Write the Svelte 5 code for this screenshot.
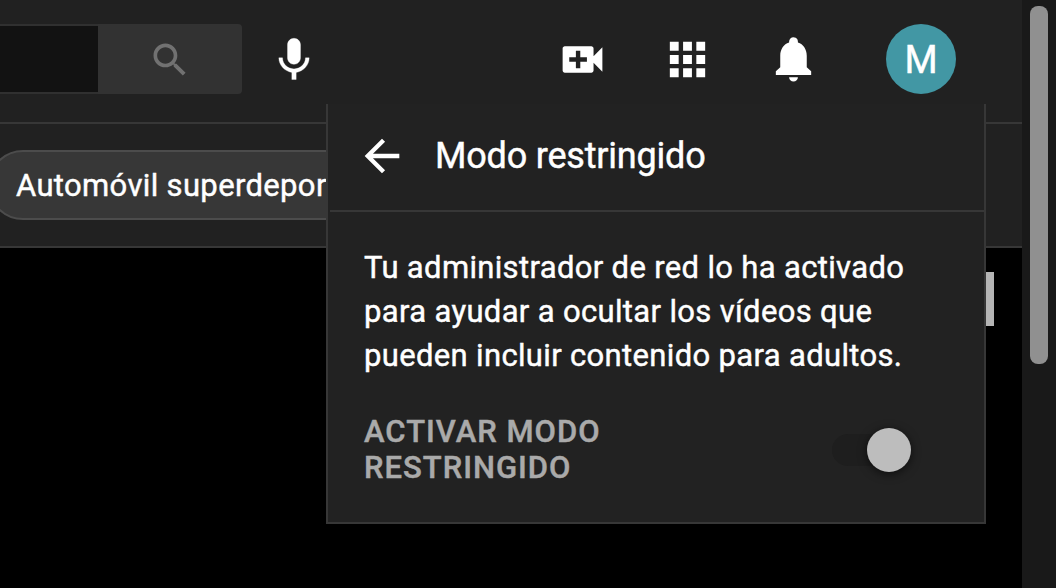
<script lang="ts">
    let enabled: boolean = true;
    let title: string = "Modo restringido";
    let description: string = "Tu administrador de red lo ha activado para ayudar a ocultar los vídeos que pueden incluir contenido para adultos.";

    const actions = [
        { name: "Crear", d: "M17 10.5V7c0-.55-.45-1-1-1H4c-.55 0-1 .45-1 1v10c0 .55.45 1 1 1h12c.55 0 1-.45 1-1v-3.5l4 4v-11l-4 4zM14 13h-3v3H9v-3H6v-2h3V8h2v3h3v2z" },
        { name: "Aplicaciones", d: "M4 8h4V4H4v4zm6 12h4v-4h-4v4zm-6 0h4v-4H4v4zm0-6h4v-4H4v4zm6 0h4v-4h-4v4zm6-10v4h4V4h-4zm-6 4h4V4h-4v4zm6 6h4v-4h-4v4zm0 6h4v-4h-4v4z" },
        { name: "Notificaciones", d: "M10 20h4c0 1.1-.9 2-2 2s-2-.9-2-2zm10-2.65V19H4v-1.65l2-1.88v-5.15C6 7.4 7.56 5.1 10 4.34v-.38c0-1.42 1.49-2.5 2.99-1.76.65.32 1.01 1.03 1.01 1.76v.39c2.44.75 4 3.06 4 5.98v5.15l2 1.87z" }
    ];
</script>

<div class="screen">
    <div class="page">
        <header class="masthead">
            <div class="search-input"></div>
            <button class="search-button" aria-label="Buscar">
                <svg viewBox="0 0 24 24" width="44" height="44"><path d="M15.5 14h-.79l-.28-.27C15.41 12.59 16 11.11 16 9.5 16 5.91 13.09 3 9.5 3S3 5.91 3 9.5 5.91 16 9.5 16c1.61 0 3.09-.59 4.23-1.57l.27.28v.79l5 4.99L20.49 19l-4.99-5zm-6 0C7.01 14 5 11.99 5 9.5S7.01 5 9.5 5 14 7.01 14 9.5 11.99 14 9.5 14z" /></svg>
            </button>
            <button class="mic" aria-label="Buscar por voz">
                <svg viewBox="0 0 24 24" width="52" height="52"><path d="M12 14c1.66 0 2.99-1.34 2.99-3L15 5c0-1.66-1.34-3-3-3S9 3.34 9 5v6c0 1.66 1.34 3 3 3zm5.3-3c0 3-2.54 5.1-5.3 5.1S6.7 14 6.7 11H5c0 3.41 2.72 6.23 6 6.72V21h2v-3.28c3.28-.48 6-3.3 6-6.72h-1.7z" /></svg>
            </button>
            <div class="actions">
                {#each actions as action}
                    <button aria-label={action.name}>
                        <svg viewBox="0 0 24 24" width="53" height="53"><path d={action.d} /></svg>
                    </button>
                {/each}
            </div>
            <div class="avatar">M</div>
        </header>
        <nav class="chips">
            <div class="chip">Automóvil superdeportivo</div>
        </nav>
        <main class="content">
            <div class="thumb"></div>
        </main>
    </div>

    <aside class="scrollbar">
        <div class="scroll-thumb"></div>
    </aside>

    <section class="menu">
        <div class="menu-header">
            <svg viewBox="0 0 24 24" width="52" height="52"><path d="M20 11H7.83l5.59-5.59L12 4l-8 8 8 8 1.41-1.41L7.83 13H20v-2z" /></svg>
            <h2>{title}</h2>
        </div>
        <div class="menu-body">
            <p>{description}</p>
            <div class="toggle-row">
                <span class="toggle-label">Activar modo restringido</span>
                <div class="toggle" class:on={enabled}>
                    <div class="knob"></div>
                </div>
            </div>
        </div>
    </section>
</div>

<style>
    :global(body) { margin: 0; background: #000; overflow: hidden; }

    .screen {
        position: relative;
        display: flex;
        width: 1056px;
        height: 588px;
        overflow: hidden;
        color: #fff;
        font-family: Roboto, 'Liberation Sans', sans-serif;
        -webkit-text-stroke: 0.45px currentColor;
    }

    .page { display: flex; flex-direction: column; width: 1022px; }

    button { display: flex; align-items: center; justify-content: center; padding: 0; border: none; background: none; }
    svg { display: block; flex: none; fill: #fff; }

    .masthead {
        display: flex;
        box-sizing: border-box;
        height: 124px;
        padding-top: 24px;
        border-bottom: 2px solid #373737;
        background: #212121;
    }

    .search-input {
        box-sizing: border-box;
        width: 98px;
        height: 70px;
        border: solid #303030;
        border-width: 2px 0;
        background: #121212;
    }

    .search-button {
        box-sizing: border-box;
        width: 144px;
        height: 70px;
        padding-top: 2px;
        border-radius: 0 4px 4px 0;
        background: #323232;
    }
    .search-button svg { fill: #717171; }

    .mic { width: 54px; height: 72px; margin-left: 25px; }
    .mic path { stroke: #fff; stroke-width: 0.15; }

    .actions { display: flex; gap: 52.5px; height: 71px; margin-left: 234.5px; }
    .actions button { width: 53px; }

    .avatar {
        width: 70px;
        height: 70px;
        margin-left: 66.5px;
        border-radius: 50%;
        background: #4297a4;
        font-size: 38px;
        line-height: 73px;
        text-align: center;
    }

    .chips {
        display: flex;
        align-items: center;
        box-sizing: border-box;
        height: 124px;
        border-bottom: 2px solid #373737;
        background: #212121;
    }

    .chip {
        box-sizing: border-box;
        height: 70px;
        margin-left: -12px;
        padding: 0 26px;
        border: 2px solid #4c4c4c;
        border-radius: 35px;
        background: #373737;
        font-size: 31px;
        line-height: 68px;
        letter-spacing: 0.35px;
        white-space: nowrap;
    }

    .content { display: flex; flex: 1; justify-content: flex-end; padding: 24px 28px 0 0; background: #000; }
    .thumb { width: 60px; height: 54px; background: #b5b5b5; }

    .scrollbar { width: 26px; padding: 6px 0 0 8px; background: #191919; }
    .scroll-thumb { width: 18px; height: 358px; border-radius: 8px; background: #909090; }

    /* popup over the page, anchored under the avatar */
    .menu {
        position: absolute;
        top: 104px;
        left: 326px;
        box-sizing: border-box;
        width: 660px;
        height: 420px;
        border: solid #373737;
        border-width: 0 2px 2px;
        background: #222;
    }

    .menu-header {
        display: flex;
        align-items: center;
        gap: 27px;
        box-sizing: border-box;
        height: 108px;
        margin-left: 2px;
        padding: 0 0 2px 26px;
        border-bottom: 2px solid #373737;
    }

    h2 { margin: 0; font-size: 36px; font-weight: 400; line-height: 44px; letter-spacing: -0.2px; }

    .menu-body { padding: 34px 36px 0; }

    p { width: 560px; margin: 0; font-size: 31px; line-height: 44px; letter-spacing: 0.34px; }

    .toggle-row { display: flex; align-items: center; justify-content: space-between; margin-top: 36px; }

    .toggle-label {
        width: 300px;
        color: #aaa;
        font-size: 31px;
        font-weight: 500;
        line-height: 36px;
        letter-spacing: 1px;
        text-transform: uppercase;
    }

    .toggle { width: 72px; height: 32px; margin-right: 44px; border-radius: 16px; background: #1e1e1e; }

    .knob {
        width: 44px;
        height: 44px;
        margin-top: -6px;
        border-radius: 50%;
        background: #bdbdbd;
        box-shadow: 0 2px 10px rgba(0, 0, 0, 0.6);
    }
    .toggle.on .knob { margin-left: 35px; }
</style>
